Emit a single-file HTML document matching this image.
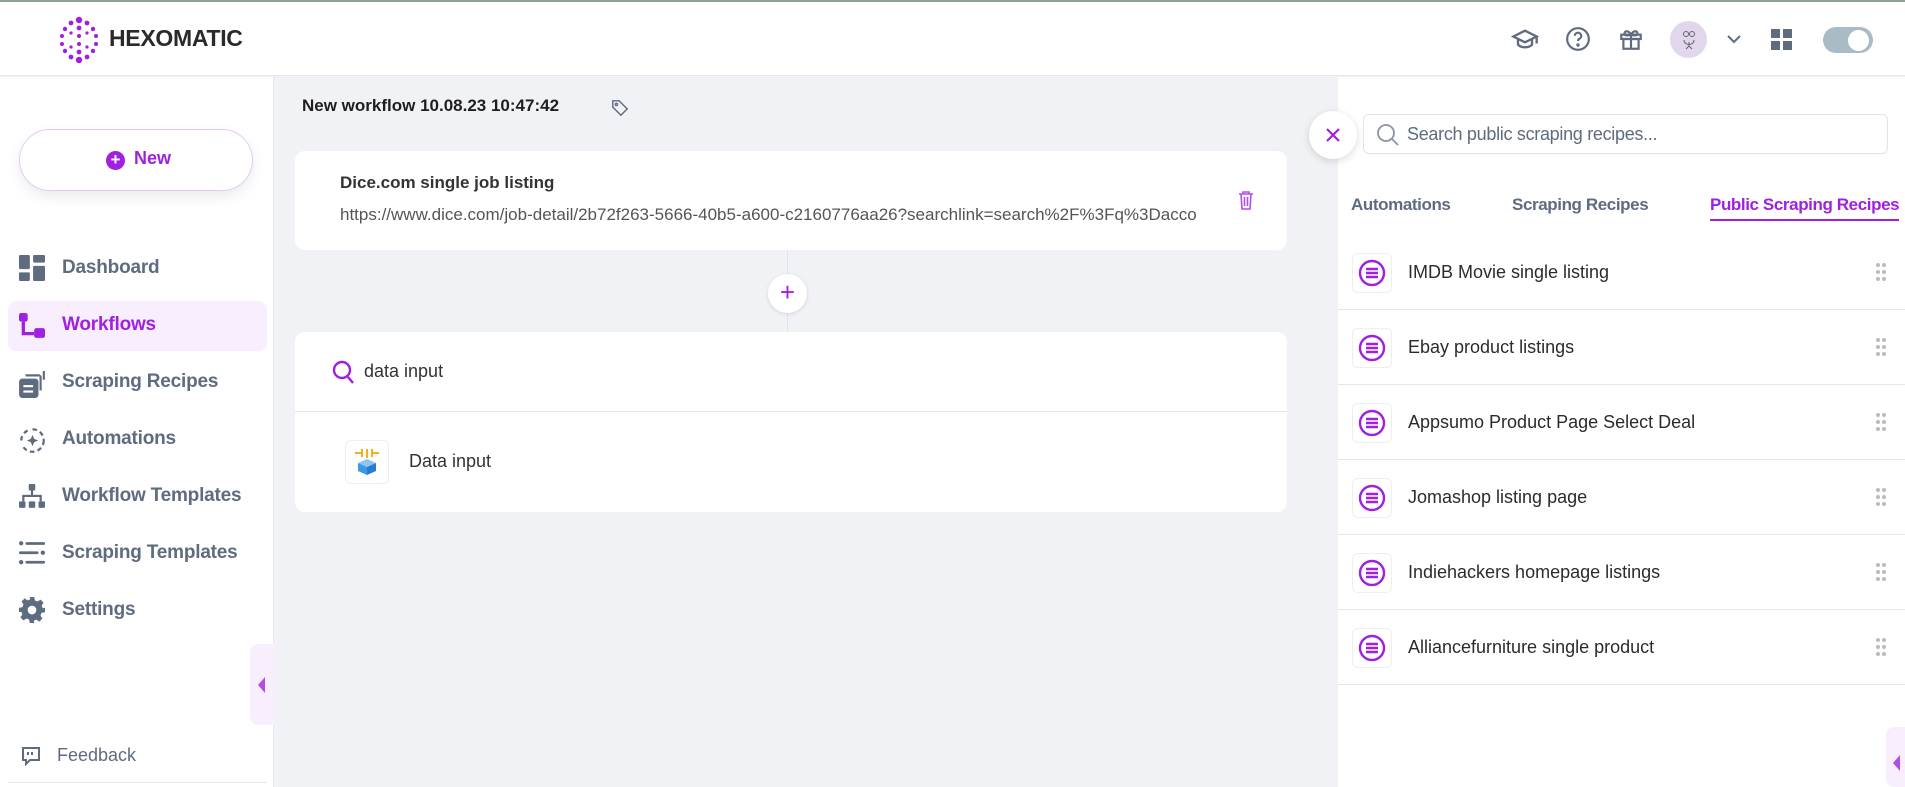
<!DOCTYPE html>
<html><head><meta charset="utf-8">
<style>
*{margin:0;padding:0;box-sizing:border-box}
body{width:1905px;height:787px;overflow:hidden;background:#f1f2f6;font-family:"Liberation Sans",sans-serif;position:relative;color:#333}
.abs{position:absolute;white-space:nowrap}
#hdr{left:0;top:0;width:1905px;height:76px;background:#fff;border-top:2px solid #8fa392;border-bottom:1px solid #e6e7eb}
#side{left:0;top:77px;width:274px;height:710px;background:#fff;border-right:1px solid #e8e8ec}
.nav{position:absolute;left:20px;font-size:19px;color:#5f6b7e;font-weight:bold;letter-spacing:-0.2px;white-space:nowrap}
.ico{position:absolute;left:19px}
.card{background:#fff;border-radius:10px}
.row{position:absolute;left:1338px;width:567px;height:75px;border-bottom:1px solid #e6e7eb}
.row .ib{position:absolute;left:14px;top:18px;width:40px;height:40px;border:1px solid #eee;border-radius:6px;background:#fff}
.row .t{position:absolute;left:70px;top:27px;font-size:18px;color:#2b2b2b;white-space:nowrap}
.row .dots{position:absolute;left:538px;top:28px}
.tab{font-size:17px;font-weight:bold;letter-spacing:-0.4px}
</style></head><body>
<div id="hdr" class="abs">
  <svg class="abs" style="left:56px;top:14px" width="46" height="48" viewBox="0 0 46 48">
    <g fill="#a020e0">
    <circle cx="23" cy="4" r="3.2"/><circle cx="15" cy="7" r="2.4"/><circle cx="31" cy="7" r="2.4"/>
    <circle cx="9" cy="13" r="2.2"/><circle cx="37" cy="13" r="2.2"/><circle cx="6" cy="20" r="2"/><circle cx="40" cy="20" r="2"/>
    <circle cx="6" cy="28" r="2"/><circle cx="40" cy="28" r="2"/><circle cx="9" cy="35" r="2.2"/><circle cx="37" cy="35" r="2.2"/>
    <circle cx="15" cy="41" r="2.4"/><circle cx="31" cy="41" r="2.4"/><circle cx="23" cy="44" r="3.2"/>
    <circle cx="23" cy="12" r="2.4"/><circle cx="23" cy="20" r="2"/><circle cx="23" cy="28" r="2"/><circle cx="23" cy="36" r="2.4"/>
    <circle cx="15" cy="17" r="1.6"/><circle cx="31" cy="17" r="1.6"/><circle cx="15" cy="31" r="1.6"/><circle cx="31" cy="31" r="1.6"/>
    </g></svg>
  <div class="abs" style="left:109px;top:23px;font-size:23px;font-weight:bold;color:#2a2a2a;letter-spacing:-0.3px">HEXOMATIC</div>
  <svg class="abs" style="left:1511px;top:24px" width="28" height="28" viewBox="0 0 24 24" fill="none" stroke="#5f6b7e" stroke-width="2"><path d="M2 9l10-5 10 5-10 5z"/><path d="M6 11v5c3 3 9 3 12 0v-5"/><path d="M22 9v6"/></svg>
  <svg class="abs" style="left:1565px;top:24px" width="26" height="26" viewBox="0 0 24 24" fill="none" stroke="#5f6b7e" stroke-width="2"><circle cx="12" cy="12" r="10"/><path d="M9 9a3 3 0 1 1 4 3c-1 .5-1 1-1 2"/><circle cx="12" cy="17.5" r=".6" fill="#5f6b7e"/></svg>
  <svg class="abs" style="left:1618px;top:24px" width="26" height="26" viewBox="0 0 24 24" fill="none" stroke="#5f6b7e" stroke-width="2"><rect x="3" y="8" width="18" height="4"/><rect x="5" y="12" width="14" height="9"/><path d="M12 8v13M12 8c-2-4-6-4-6-1s6 1 6 1c2-4 6-4 6-1s-6 1-6 1"/></svg>
  <div class="abs" style="left:1670px;top:19px;width:37px;height:37px;border-radius:50%;background:#e2d6ee;border:1px solid #ddd"></div>
  <svg class="abs" style="left:1682px;top:27px" width="14" height="22" viewBox="0 0 14 22" fill="none" stroke="#666" stroke-width="1"><circle cx="4" cy="5" r="2.5"/><circle cx="10" cy="5" r="2.5"/><path d="M2 11c0 6 10 6 10 0M7 13v4M4 20l3-3 3 3"/></svg>
  <svg class="abs" style="left:1725px;top:30px" width="18" height="14" viewBox="0 0 18 14" fill="none" stroke="#5f6b7e" stroke-width="2"><path d="M3 4l6 6 6-6"/></svg>
  <svg class="abs" style="left:1771px;top:27px" width="22" height="22" viewBox="0 0 22 22" fill="#5f6b7e"><rect x="0" y="0" width="9" height="9"/><rect x="12" y="0" width="9" height="9"/><rect x="0" y="12" width="9" height="9"/><rect x="12" y="12" width="9" height="9"/></svg>
  <div class="abs" style="left:1823px;top:25px;width:50px;height:26px;border-radius:13px;background:#a9bcc6"></div>
  <div class="abs" style="left:1848px;top:28px;width:21px;height:21px;border-radius:50%;background:#fff"></div>
</div>

<div id="side" class="abs">
  <div class="abs" style="left:19px;top:52px;width:234px;height:62px;border-radius:31px;border:1px solid #e5c9f3;background:#fff;box-shadow:0 6px 14px rgba(0,0,0,.08)"></div>
  <div class="abs" style="left:106px;top:74px;width:19px;height:19px;border-radius:50%;background:#a020e0;color:#fff;font-size:17px;line-height:18px;text-align:center;font-weight:bold">+</div>
  <div class="abs" style="left:134px;top:71px;font-size:18px;color:#a020e0;font-weight:bold">New</div>

  <div class="abs" style="left:8px;top:224px;width:259px;height:50px;border-radius:8px;background:#f8eefd"></div>

  <svg class="ico" style="top:178px" width="26" height="26" viewBox="0 0 24 24" fill="#5f6b7e"><rect x="0" y="0" width="10" height="13" rx="1"/><rect x="13" y="0" width="11" height="7" rx="1"/><rect x="0" y="16" width="10" height="8" rx="1"/><rect x="13" y="10" width="11" height="14" rx="1"/></svg>
  <div class="nav" style="left:62px;top:180px">Dashboard</div>

  <svg class="ico" style="top:236px" width="26" height="26" viewBox="0 0 24 24"><rect x="0" y="0" width="8" height="8" rx="2" fill="#a020e0"/><rect x="14" y="14" width="10" height="9" rx="2" fill="#a020e0"/><path d="M4 8v11h10" stroke="#a020e0" stroke-width="3" fill="none"/></svg>
  <div class="nav" style="left:62px;top:237px;color:#a020e0">Workflows</div>

  <svg class="ico" style="top:293px" width="26" height="28" viewBox="0 0 24 26" fill="#5f6b7e"><rect x="0" y="8" width="18" height="18" rx="3"/><path d="M6 4h12a3 3 0 0 1 3 3v12h-2V6H6z"/><rect x="22" y="1" width="2" height="8"/><rect x="4" y="14" width="9" height="2" fill="#fff"/><rect x="4" y="19" width="9" height="2" fill="#fff"/></svg>
  <div class="nav" style="left:62px;top:294px">Scraping Recipes</div>

  <svg class="ico" style="top:350px" width="27" height="27" viewBox="0 0 24 24" fill="none" stroke="#5f6b7e" stroke-width="2"><path d="M12 2a10 10 0 0 1 10 10M22 12a10 10 0 0 1-18 6M2 12A10 10 0 0 1 8 3" stroke-dasharray="4 3"/><path d="M12 7l1.5 3.5L17 12l-3.5 1.5L12 17l-1.5-3.5L7 12l3.5-1.5z" fill="#5f6b7e" stroke="none"/></svg>
  <div class="nav" style="left:62px;top:351px">Automations</div>

  <svg class="ico" style="top:407px" width="26" height="26" viewBox="0 0 24 24" fill="#5f6b7e"><rect x="9" y="0" width="6" height="6" rx="1"/><rect x="11" y="6" width="2" height="6"/><rect x="3" y="10" width="18" height="2"/><rect x="0" y="16" width="6" height="6" rx="1"/><rect x="9" y="16" width="6" height="6" rx="1"/><rect x="18" y="16" width="6" height="6" rx="1"/><rect x="3" y="11" width="2" height="5"/><rect x="19" y="11" width="2" height="5"/></svg>
  <div class="nav" style="left:62px;top:408px">Workflow Templates</div>

  <svg class="ico" style="top:464px" width="26" height="24" viewBox="0 0 24 22" fill="#5f6b7e"><circle cx="2" cy="2" r="2"/><rect x="6" y="1" width="18" height="2.5" rx="1"/><rect x="0" y="9.5" width="18" height="2.5" rx="1"/><circle cx="22" cy="10.7" r="2"/><circle cx="2" cy="19.5" r="2"/><rect x="6" y="18.3" width="18" height="2.5" rx="1"/></svg>
  <div class="nav" style="left:62px;top:465px">Scraping Templates</div>

  <svg class="ico" style="top:520px" width="26" height="26" viewBox="0 0 24 24" fill="#5f6b7e"><path d="M10 0h4l.7 3.2 2.4 1 2.8-1.8 2.8 2.8-1.8 2.8 1 2.4L24 10v4l-3.2.7-1 2.4 1.8 2.8-2.8 2.8-2.8-1.8-2.4 1L14 24h-4l-.7-3.2-2.4-1-2.8 1.8-2.8-2.8 1.8-2.8-1-2.4L0 14v-4l3.2-.7 1-2.4L2.4 4.1l2.8-2.8 2.8 1.8 2.4-1z"/><circle cx="12" cy="12" r="4" fill="#fff"/></svg>
  <div class="nav" style="left:62px;top:522px">Settings</div>

  <div class="abs" style="left:250px;top:567px;width:24px;height:81px;border-radius:8px 0 0 8px;background:#f8eefd"></div>
  <div class="abs" style="left:258px;top:600px;width:0;height:0;border-top:8px solid transparent;border-bottom:8px solid transparent;border-right:7px solid #b24de8"></div>

  <svg class="abs" style="left:21px;top:669px" width="20" height="20" viewBox="0 0 20 20" fill="none" stroke="#5f6b7e" stroke-width="2"><path d="M2 2h16v12H9l-4 4v-4H2z"/><path d="M7 6v3M11 6v3" /></svg>
  <div class="abs" style="left:57px;top:668px;font-size:18px;color:#5f6b7e">Feedback</div>
  <div class="abs" style="left:8px;top:705px;width:259px;height:1px;background:#e6e7eb"></div>
</div>

<div class="abs" style="left:302px;top:96px;font-size:17px;font-weight:bold;color:#1f1f1f">New workflow 10.08.23 10:47:42</div>
<svg class="abs" style="left:611px;top:99px" width="18" height="18" viewBox="0 0 20 20" fill="none" stroke="#5f6b7e" stroke-width="1.6"><path d="M2 2h7l9 9-7 7-9-9z"/><circle cx="6" cy="6" r="1.2"/></svg>

<div class="abs card" style="left:295px;top:151px;width:992px;height:99px"></div>
<div class="abs" style="left:340px;top:173px;font-size:17px;font-weight:bold;color:#333">Dice.com single job listing</div>
<div class="abs" style="left:340px;top:205px;width:892px;overflow:hidden;white-space:nowrap;font-size:17px;color:#555">https://www.dice.com/job-detail/2b72f263-5666-40b5-a600-c2160776aa26?searchlink=search%2F%3Fq%3Dacco</div>
<svg class="abs" style="left:1238px;top:190px" width="16" height="20" viewBox="0 0 16 20" fill="none" stroke="#b24de8" stroke-width="1.6"><path d="M1 4h14M5 4V2h6v2M3 4l1 15h8l1-15M6.5 7v9M9.5 7v9"/></svg>

<div class="abs" style="left:787px;top:250px;width:1px;height:82px;background:#e2e3e8"></div>
<div class="abs" style="left:768px;top:274px;width:39px;height:39px;border-radius:50%;background:#fff;box-shadow:0 1px 4px rgba(0,0,0,.12);color:#a020e0;font-size:26px;line-height:37px;text-align:center">+</div>

<div class="abs card" style="left:295px;top:332px;width:992px;height:180px"></div>
<div class="abs" style="left:295px;top:411px;width:992px;height:1px;background:#e6e7eb"></div>
<svg class="abs" style="left:332px;top:360px" width="24" height="26" viewBox="0 0 24 26" fill="none" stroke="#a020e0" stroke-width="2.4"><circle cx="10" cy="10" r="8"/><path d="M16 17l5 6"/></svg>
<div class="abs" style="left:364px;top:361px;font-size:18px;color:#333">data input</div>
<div class="abs" style="left:345px;top:440px;width:44px;height:44px;border:1px solid #eee;border-radius:6px;background:#fff"></div>
<svg class="abs" style="left:351px;top:446px" width="32" height="32" viewBox="0 0 32 32"><path d="M4 7h6M22 7h6M11 3v8M16 3v9M21 3v8" stroke="#f0b020" stroke-width="2"/><path d="M7 17l9-4 9 4-9 4z" fill="#8cc6f0"/><path d="M7 17v8l9 4v-8z" fill="#3a9ae6"/><path d="M25 17v8l-9 4v-8z" fill="#2a7cd0"/></svg>
<div class="abs" style="left:409px;top:451px;font-size:18px;color:#333">Data input</div>

<div class="abs" style="left:1338px;top:77px;width:567px;height:710px;background:#fff"></div>
<div class="abs" style="left:1309px;top:111px;width:48px;height:48px;border-radius:50%;background:#fff;box-shadow:0 2px 8px rgba(0,0,0,.15)"></div>
<svg class="abs" style="left:1325px;top:127px" width="16" height="16" viewBox="0 0 16 16" stroke="#a020e0" stroke-width="2.2"><path d="M2 2l12 12M14 2L2 14"/></svg>
<div class="abs" style="left:1363px;top:114px;width:525px;height:40px;border:1px solid #e2e3e8;border-radius:6px;background:#fff"></div>
<svg class="abs" style="left:1376px;top:123px" width="24" height="24" viewBox="0 0 24 24" fill="none" stroke="#8a94a4" stroke-width="1.8"><circle cx="10" cy="10" r="8"/><path d="M16 16l6 6"/></svg>
<div class="abs" style="left:1407px;top:124px;font-size:18px;color:#5f6b7e;letter-spacing:-0.3px">Search public scraping recipes...</div>

<div class="abs tab" style="left:1351px;top:195px;color:#5f6b7e">Automations</div>
<div class="abs tab" style="left:1512px;top:195px;color:#5f6b7e">Scraping Recipes</div>
<div class="abs tab" style="left:1710px;top:195px;color:#a020e0">Public Scraping Recipes</div>
<div class="abs" style="left:1710px;top:219px;width:189px;height:2px;background:#a020e0"></div>

<div class="row" style="top:235px"><div class="ib"></div><svg class="abs" style="left:20px;top:24px" width="28" height="28" viewBox="0 0 28 28" fill="none" stroke="#a020e0" stroke-width="2.4"><circle cx="14" cy="14" r="12"/><path d="M8 10h12M8 14h12M8 18h12"/></svg><div class="t">IMDB Movie single listing</div><svg class="dots" width="10" height="18" viewBox="0 0 10 18" fill="#bbb"><circle cx="2" cy="2" r="2"/><circle cx="8" cy="2" r="2"/><circle cx="2" cy="9" r="2"/><circle cx="8" cy="9" r="2"/><circle cx="2" cy="16" r="2"/><circle cx="8" cy="16" r="2"/></svg></div>
<div class="row" style="top:310px"><div class="ib"></div><svg class="abs" style="left:20px;top:24px" width="28" height="28" viewBox="0 0 28 28" fill="none" stroke="#a020e0" stroke-width="2.4"><circle cx="14" cy="14" r="12"/><path d="M8 10h12M8 14h12M8 18h12"/></svg><div class="t">Ebay product listings</div><svg class="dots" width="10" height="18" viewBox="0 0 10 18" fill="#bbb"><circle cx="2" cy="2" r="2"/><circle cx="8" cy="2" r="2"/><circle cx="2" cy="9" r="2"/><circle cx="8" cy="9" r="2"/><circle cx="2" cy="16" r="2"/><circle cx="8" cy="16" r="2"/></svg></div>
<div class="row" style="top:385px"><div class="ib"></div><svg class="abs" style="left:20px;top:24px" width="28" height="28" viewBox="0 0 28 28" fill="none" stroke="#a020e0" stroke-width="2.4"><circle cx="14" cy="14" r="12"/><path d="M8 10h12M8 14h12M8 18h12"/></svg><div class="t">Appsumo Product Page Select Deal</div><svg class="dots" width="10" height="18" viewBox="0 0 10 18" fill="#bbb"><circle cx="2" cy="2" r="2"/><circle cx="8" cy="2" r="2"/><circle cx="2" cy="9" r="2"/><circle cx="8" cy="9" r="2"/><circle cx="2" cy="16" r="2"/><circle cx="8" cy="16" r="2"/></svg></div>
<div class="row" style="top:460px"><div class="ib"></div><svg class="abs" style="left:20px;top:24px" width="28" height="28" viewBox="0 0 28 28" fill="none" stroke="#a020e0" stroke-width="2.4"><circle cx="14" cy="14" r="12"/><path d="M8 10h12M8 14h12M8 18h12"/></svg><div class="t">Jomashop listing page</div><svg class="dots" width="10" height="18" viewBox="0 0 10 18" fill="#bbb"><circle cx="2" cy="2" r="2"/><circle cx="8" cy="2" r="2"/><circle cx="2" cy="9" r="2"/><circle cx="8" cy="9" r="2"/><circle cx="2" cy="16" r="2"/><circle cx="8" cy="16" r="2"/></svg></div>
<div class="row" style="top:535px"><div class="ib"></div><svg class="abs" style="left:20px;top:24px" width="28" height="28" viewBox="0 0 28 28" fill="none" stroke="#a020e0" stroke-width="2.4"><circle cx="14" cy="14" r="12"/><path d="M8 10h12M8 14h12M8 18h12"/></svg><div class="t">Indiehackers homepage listings</div><svg class="dots" width="10" height="18" viewBox="0 0 10 18" fill="#bbb"><circle cx="2" cy="2" r="2"/><circle cx="8" cy="2" r="2"/><circle cx="2" cy="9" r="2"/><circle cx="8" cy="9" r="2"/><circle cx="2" cy="16" r="2"/><circle cx="8" cy="16" r="2"/></svg></div>
<div class="row" style="top:610px"><div class="ib"></div><svg class="abs" style="left:20px;top:24px" width="28" height="28" viewBox="0 0 28 28" fill="none" stroke="#a020e0" stroke-width="2.4"><circle cx="14" cy="14" r="12"/><path d="M8 10h12M8 14h12M8 18h12"/></svg><div class="t">Alliancefurniture single product</div><svg class="dots" width="10" height="18" viewBox="0 0 10 18" fill="#bbb"><circle cx="2" cy="2" r="2"/><circle cx="8" cy="2" r="2"/><circle cx="2" cy="9" r="2"/><circle cx="8" cy="9" r="2"/><circle cx="2" cy="16" r="2"/><circle cx="8" cy="16" r="2"/></svg></div>

<div class="abs" style="left:1886px;top:727px;width:19px;height:60px;border-radius:8px 0 0 8px;background:#f8eefd"></div>
<div class="abs" style="left:1893px;top:755px;width:0;height:0;border-top:8px solid transparent;border-bottom:8px solid transparent;border-right:7px solid #b24de8"></div>
</body></html>
